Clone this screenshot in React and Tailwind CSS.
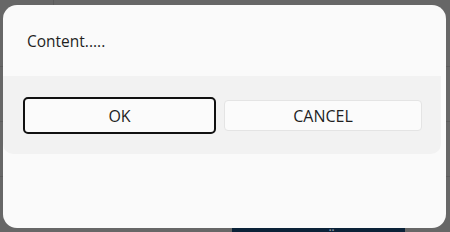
export default function App() {
  return (
    <div
      className="relative w-[450px] h-[232px] overflow-hidden bg-[#676767]"
      style={{ fontFamily: '"Open Sans", "Noto Sans", sans-serif' }}
    >
      {/* page behind the overlay */}
      <div className="flex flex-col">
        <div className="h-[67px] border-b border-[#5c5c5c] flex">
          <div className="w-[54px] h-[6px] border-r border-[#5c5c5c]" />
        </div>
        <div className="h-[55px] border-b border-[#5c5c5c]" />
        <div className="h-[55px] border-b border-[#5c5c5c]" />
        <div className="flex pl-[232px] pt-[49px]">
          <div className="w-[173px] h-[20px] bg-[#0b2238] text-[#8a97a6] text-[15px] leading-[20px] font-semibold tracking-[1px] flex justify-center pt-[1px]">
            HINZUFÜGEN
          </div>
        </div>
      </div>

      {/* overlay + dialog */}
      <div className="absolute inset-0 pl-[3px] pt-[5px]">
        <div className="w-[443px] h-[223px] rounded-[14px] bg-[#fafafa] flex flex-col">
          <div className="h-[71px] pl-[24px] pt-[26px] text-[15.5px] leading-[20px] text-[#1f1f1f]">
            Content.....
          </div>
          <div className="mr-[5px] h-[78px] rounded-b-[10px] bg-[#f2f2f2] flex items-start pl-[20px] pt-[21px] gap-[8px]">
            <button className="w-[193px] h-[37px] rounded-[5px] border-[2px] border-[#111] bg-[#fbfbfb] text-[16px] text-[#1f1f1f] flex items-center justify-center">
              OK
            </button>
            <button className="mt-[3px] w-[198px] h-[31px] rounded-[4px] border border-[#e4e4e4] bg-[#fbfbfb] text-[16px] text-[#1f1f1f] flex items-center justify-center">
              CANCEL
            </button>
          </div>
        </div>
      </div>
    </div>
  );
}
